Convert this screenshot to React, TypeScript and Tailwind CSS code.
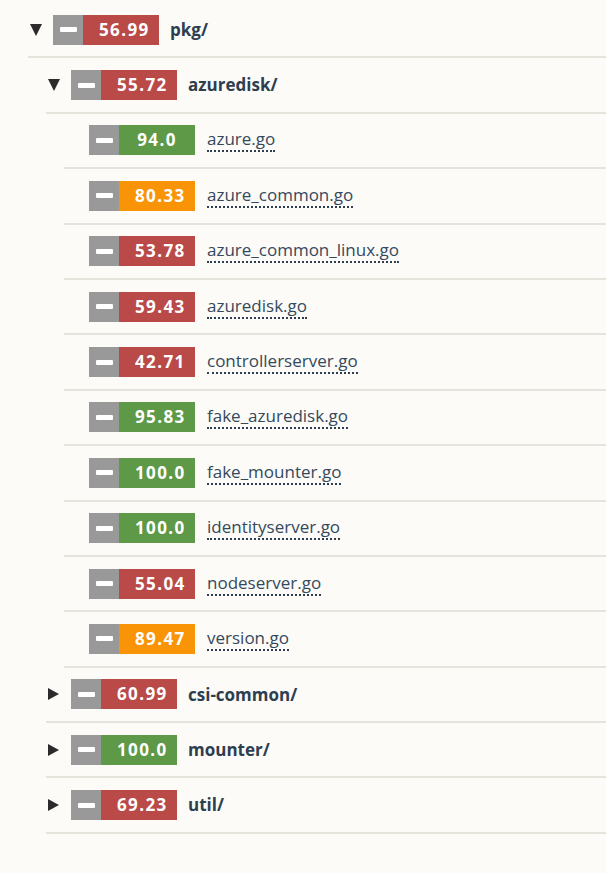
import React from 'react';

type Row = {
  name: string;
  score: string;
  level: number;
  kind: 'open' | 'closed' | 'file';
};

const rows: Row[] = [
  { name: 'pkg/', score: '56.99', level: 0, kind: 'open' },
  { name: 'azuredisk/', score: '55.72', level: 1, kind: 'open' },
  { name: 'azure.go', score: '94.0', level: 2, kind: 'file' },
  { name: 'azure_common.go', score: '80.33', level: 2, kind: 'file' },
  { name: 'azure_common_linux.go', score: '53.78', level: 2, kind: 'file' },
  { name: 'azuredisk.go', score: '59.43', level: 2, kind: 'file' },
  { name: 'controllerserver.go', score: '42.71', level: 2, kind: 'file' },
  { name: 'fake_azuredisk.go', score: '95.83', level: 2, kind: 'file' },
  { name: 'fake_mounter.go', score: '100.0', level: 2, kind: 'file' },
  { name: 'identityserver.go', score: '100.0', level: 2, kind: 'file' },
  { name: 'nodeserver.go', score: '55.04', level: 2, kind: 'file' },
  { name: 'version.go', score: '89.47', level: 2, kind: 'file' },
  { name: 'csi-common/', score: '60.99', level: 1, kind: 'closed' },
  { name: 'mounter/', score: '100.0', level: 1, kind: 'closed' },
  { name: 'util/', score: '69.23', level: 1, kind: 'closed' },
];

function scoreColor(s: string) {
  const v = parseFloat(s);
  if (v >= 90) return 'bg-[#5d9946]';
  if (v >= 75) return 'bg-[#f89406]';
  return 'bg-[#b94a48]';
}

const indent = ['ml-[28px]', 'ml-[46px]', 'ml-[64px]'];

function Toggle({ kind }: { kind: Row['kind'] }) {
  return (
    <span className="w-[25px] flex items-center pl-[2px]">
      {kind === 'open' && (
        <svg width="12" height="12" viewBox="0 0 12 12">
          <path d="M0 0 H12 L6 12 Z" fill="#2b2b2b" />
        </svg>
      )}
      {kind === 'closed' && (
        <svg width="11" height="12" viewBox="0 0 11 12">
          <path d="M0 0 L11 6 L0 12 Z" fill="#2b2b2b" />
        </svg>
      )}
    </span>
  );
}

function Badge({ score }: { score: string }) {
  return (
    <span className="flex h-[30px]">
      <span className="w-[30px] bg-[#999999] flex items-center justify-center">
        <span className="block w-[17px] h-[5px] bg-white rounded-[1px]" />
      </span>
      <span
        className={`block w-[76px] px-[16px] ${scoreColor(score)} text-center whitespace-nowrap leading-[30px] text-white font-bold text-[17px] tracking-[1.4px]`}
      >
        {score}
      </span>
    </span>
  );
}

export default function App() {
  return (
    <main
      className="min-h-screen bg-[#fcfbf7] pt-[3px]"
      style={{ fontFamily: '"Open Sans", "DejaVu Sans", sans-serif' }}
    >
      <ul>
        {rows.map((r, i) => (
          <li
            key={i}
            className={`${indent[r.level]} h-[55.4px] flex items-center border-b-2 border-[#e6e3dc]`}
          >
            <Toggle kind={r.kind} />
            <Badge score={r.score} />
            {r.kind === 'file' ? (
              <span className="ml-[12px] text-[17px] text-[#34495e] leading-[22px] border-b-2 border-dotted border-[#2c3e50]">
                {r.name}
              </span>
            ) : (
              <span className="ml-[11px] text-[17px] font-bold text-[#2c3e50]">{r.name}</span>
            )}
          </li>
        ))}
      </ul>
    </main>
  );
}
